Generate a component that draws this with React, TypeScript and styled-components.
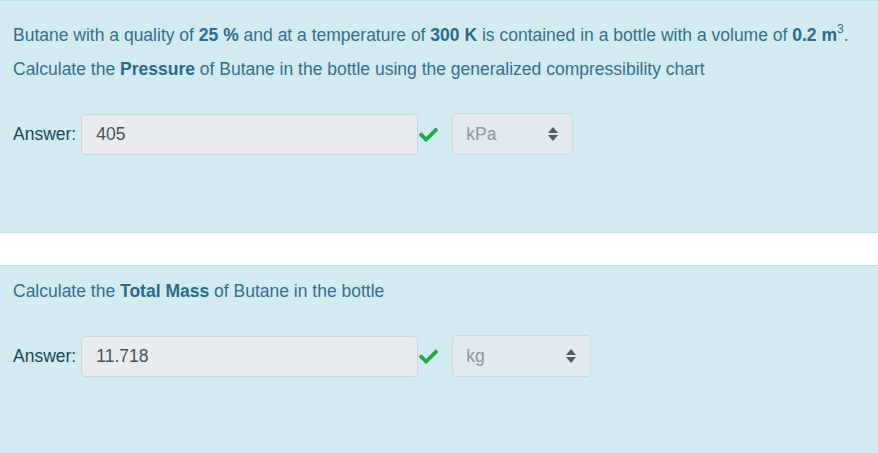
import React from 'react';
import styled, { createGlobalStyle } from 'styled-components';

const GlobalStyle = createGlobalStyle`
  html, body {
    margin: 0;
    padding: 0;
    background: #ffffff;
  }
  body {
    font-family: 'Liberation Sans', Arial, sans-serif;
  }
`;

const Page = styled.div`
  width: 878px;
  height: 453px;
  overflow: hidden;
  background: #ffffff;
`;

const Panel = styled.div<{ top: number; height: number; last?: boolean }>`
  box-sizing: border-box;
  height: ${({ height }) => height}px;
  padding: ${({ top }) => top}px 13px 0 13px;
  background-color: #d1ebf1;
  border-top: 1px solid #bce3eb;
  border-bottom: ${({ last }) => (last ? 'none' : '1px solid #bce3eb')};
  margin-bottom: ${({ last }) => (last ? '0' : '32px')};
  color: #33708f;
  font-size: 17.5px;
`;

const Text = styled.p`
  margin: 0 0 10px 0;
  line-height: 24px;

  b {
    color: #2a6a8d;
    font-weight: 700;
  }

  sup {
    font-size: 12px;
    font-weight: 400;
    line-height: 0;
    vertical-align: 8px;
  }
`;

const AnswerRow = styled.div`
  display: flex;
  align-items: center;
  margin-top: 32px;
`;

const Label = styled.label`
  color: #17495c;
  font-size: 17.5px;
  margin-right: 5px;
`;

const Input = styled.div`
  box-sizing: border-box;
  width: 337px;
  height: 41px;
  display: flex;
  align-items: center;
  padding-left: 14px;
  background: #e8ecef;
  border: 1px solid #cdd6dc;
  border-radius: 4px;
  color: #4a525a;
  font-size: 17.5px;
`;

const Check = styled.svg`
  width: 19px;
  height: 15px;
  margin: 0 14px 0 1px;
  fill: #27a744;
`;

const Select = styled.div<{ w: number }>`
  box-sizing: border-box;
  width: ${({ w }) => w}px;
  height: 42px;
  display: flex;
  align-items: center;
  justify-content: space-between;
  padding: 0 14px 0 13px;
  background: #e2e9ef;
  border: 1px solid #c9dae2;
  border-radius: 4px;
  color: #8d98a2;
  font-size: 17.5px;
`;

const Sort = styled.svg`
  width: 10px;
  height: 14px;
  fill: #545d66;
`;

const CheckIcon = () => (
  <Check viewBox="0 0 512 400">
    <path d="M173.9 391.4l-166.4-166.4c-10-10-10-26.2 0-36.2l36.2-36.2c10-10 26.2-10 36.2 0L192 264.7 432.1 24.6c10-10 26.2-10 36.2 0l36.2 36.2c10 10 10 26.2 0 36.2l-294.4 294.4c-10 10-26.2 10-36.2 0z" />
  </Check>
);

const SortIcon = () => (
  <Sort viewBox="0 0 10 14">
    <path d="M5 0 L10 6 H0 Z" />
    <path d="M0 8 H10 L5 14 Z" />
  </Sort>
);

type AnswerProps = { value: string; unit: string; unitWidth: number };

const Answer = ({ value, unit, unitWidth }: AnswerProps) => (
  <AnswerRow>
    <Label>Answer:</Label>
    <Input>{value}</Input>
    <CheckIcon />
    <Select w={unitWidth}>
      <span>{unit}</span>
      <SortIcon />
    </Select>
  </AnswerRow>
);

export default function App() {
  return (
    <Page>
      <GlobalStyle />
      <Panel top={22} height={233}>
        <Text>
          Butane with a quality of <b>25 %</b> and at a temperature of <b>300 K</b> is contained in a
          bottle with a volume of <b>0.2 m</b>
          <sup>3</sup>.
        </Text>
        <Text>
          Calculate the <b>Pressure</b> of Butane in the bottle using the generalized compressibility
          chart
        </Text>
        <Answer value="405" unit="kPa" unitWidth={121} />
      </Panel>
      <Panel top={13} height={188} last>
        <Text>
          Calculate the <b>Total Mass</b> of Butane in the bottle
        </Text>
        <Answer value="11.718" unit="kg" unitWidth={139} />
      </Panel>
    </Page>
  );
}
